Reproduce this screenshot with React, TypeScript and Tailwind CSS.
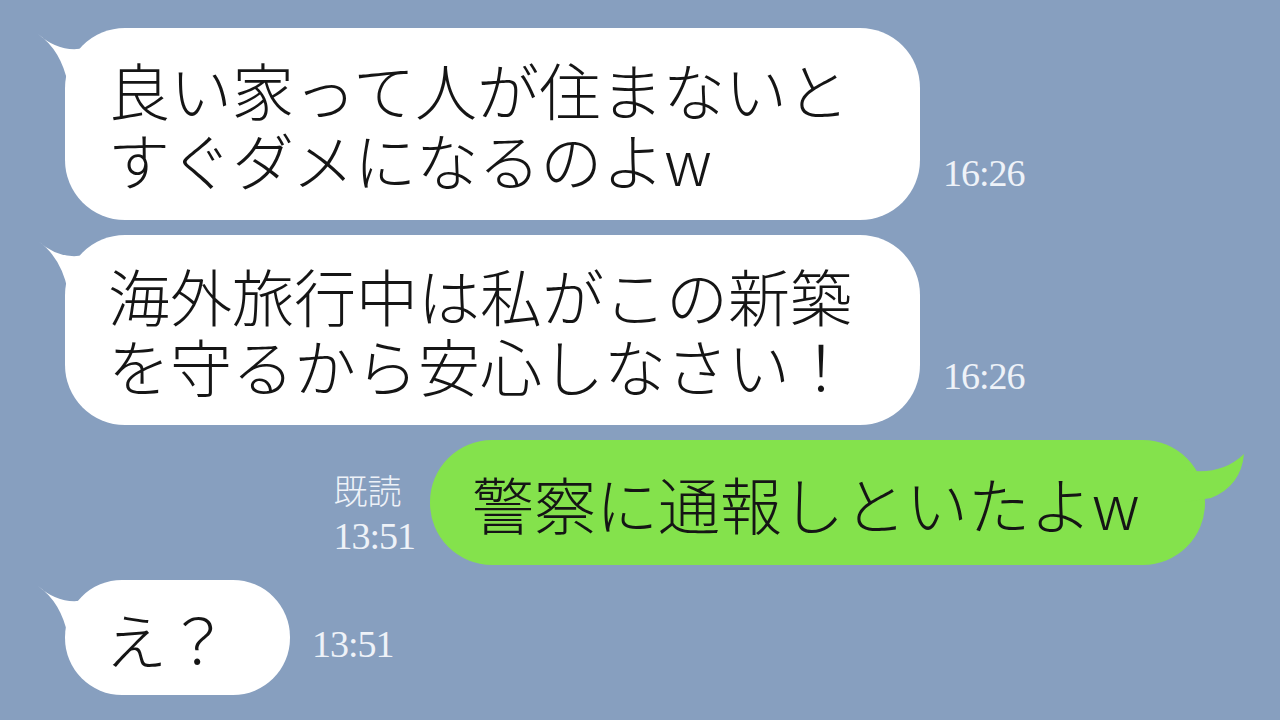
import React from 'react';

const jp = { fontFamily: '"Noto Sans CJK JP", "Noto Sans", sans-serif' };
const stamp = { fontFamily: '"Liberation Serif", "Noto Sans CJK JP", serif' };

const LeftTail = () => (
  <svg className="absolute -left-[30px] top-0" width="70" height="70" viewBox="0 0 70 70">
    <path d="M3 6 Q30 30 62 16 L62 60 L33 56 Q26 22 3 6 Z" fill="#ffffff" />
  </svg>
);

const RightTail = () => (
  <svg className="absolute -right-[42px] top-0" width="70" height="70" viewBox="0 0 70 70">
    <path d="M67 14 Q44 36 8 30 L8 62 L34 58 Q64 46 67 14 Z" fill="#84e24c" />
  </svg>
);

const Stamp = ({ children, className }: { children: React.ReactNode; className: string }) => (
  <div className={`text-[#eef2f8] text-[38px] leading-none tracking-[-1px] ${className}`} style={stamp}>
    {children}
  </div>
);

const App = () => {
  return (
    <div className="w-[1280px] h-[720px] bg-[#879fbf] overflow-hidden flex flex-col gap-[15px] pt-[28px]">
      {/* message 1 */}
      <div className="flex items-end pl-[65px]">
        <div className="relative w-[855px] h-[192px] bg-white rounded-[60px] pl-[43px] flex items-center">
          <LeftTail />
          <p className="relative text-[#151515] text-[62px] leading-[70px] font-light" style={jp}>
            良い家って人が住まないと
            <br />
            すぐダメになるのよw
          </p>
        </div>
        <Stamp className="ml-[23px] mb-[28px]">16:26</Stamp>
      </div>

      {/* message 2 */}
      <div className="flex items-end pl-[65px]">
        <div className="relative w-[855px] h-[190px] bg-white rounded-[60px] pl-[43px] flex items-center">
          <LeftTail />
          <p className="relative text-[#151515] text-[62px] leading-[70px] font-light" style={jp}>
            海外旅行中は私がこの新築
            <br />
            を守るから安心しなさい！
          </p>
        </div>
        <Stamp className="ml-[23px] mb-[30px]">16:26</Stamp>
      </div>

      {/* my message */}
      <div className="flex items-end justify-end pr-[75px]">
        <div className="flex flex-col items-start gap-[10px] mr-[15px] mb-[10px]">
          <div className="text-[#eef2f8] text-[34px] font-light leading-none" style={jp}>既読</div>
          <Stamp className="">13:51</Stamp>
        </div>
        <div className="relative w-[775px] h-[125px] bg-[#84e24c] rounded-[62px] pl-[42px] flex items-center">
          <RightTail />
          <p className="relative text-[#151515] text-[62px] leading-[70px] font-light" style={jp}>
            警察に通報しといたよw
          </p>
        </div>
      </div>

      {/* message 4 */}
      <div className="flex items-end pl-[65px]">
        <div className="relative w-[225px] h-[115px] bg-white rounded-[57px] pl-[40px] flex items-center">
          <LeftTail />
          <p className="relative text-[#151515] text-[62px] leading-[70px] font-light" style={jp}>
            え？
          </p>
        </div>
        <Stamp className="ml-[22px] mb-[32px]">13:51</Stamp>
      </div>
    </div>
  );
};

export default App;
